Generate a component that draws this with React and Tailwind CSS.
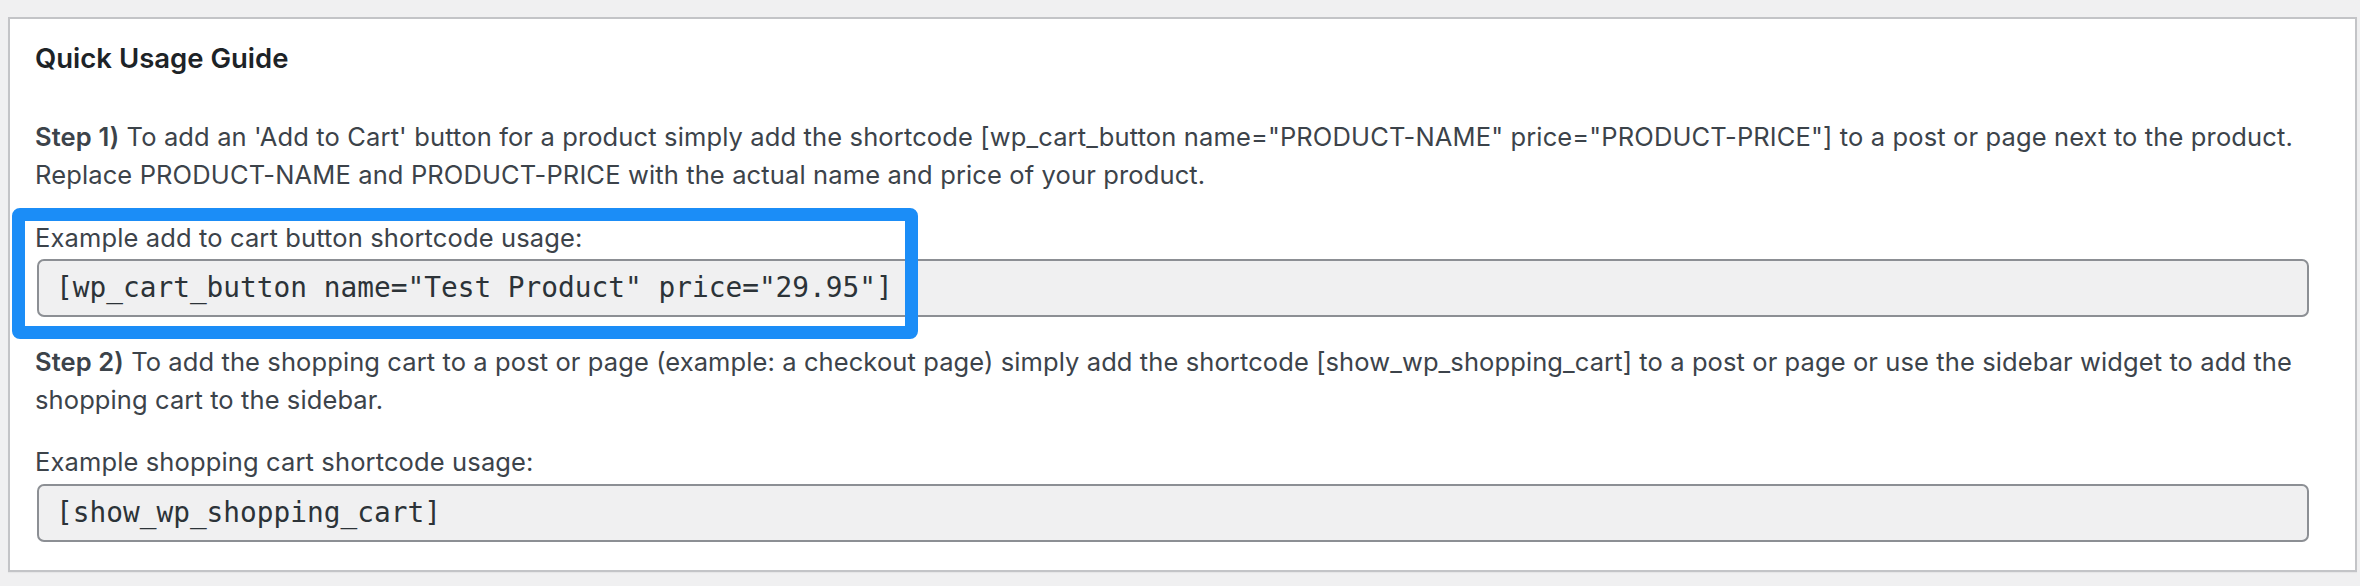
import React from 'react';

const bodyFont = { fontFamily: 'Inter, "Noto Sans", sans-serif' };

function CodeField({ children }) {
    return (
        <div className="mt-[2px] ml-[2px] w-[99%] h-[58px] flex items-center pl-[17px] rounded-[7px] border-2 border-[#8c8f94] bg-[#f0f0f1] font-['DejaVu_Sans_Mono',monospace] text-[27.8px] text-[#2c3338] whitespace-nowrap">
            {children}
        </div>
    );
}

export default function App() {
    return (
        <div className="relative w-[2360px] h-[586px] bg-[#f0f0f1] pt-[17px] pl-[8px] pr-[3px] overflow-hidden" style={bodyFont}>
            {/* Postbox card */}
            <div className="h-[555px] bg-white border-2 border-[#c3c4c7] px-[25px] shadow-[0_1px_1px_rgba(0,0,0,0.04)]">
                <h3 className="mt-[20px] text-[27.5px] leading-[38px] font-semibold text-[#1d2327]">Quick Usage Guide</h3>

                <p className="mt-[41px] text-[25.5px] leading-[38.3px] tracking-[0.13px] text-[#3c434a] whitespace-nowrap">
                    <strong className="font-semibold">Step 1)</strong> To add an 'Add to Cart' button for a product simply add the shortcode [wp_cart_button name="PRODUCT-NAME" price="PRODUCT-PRICE"] to a post or page next to the product.
                    <br />
                    Replace PRODUCT-NAME and PRODUCT-PRICE with the actual name and price of your product.
                </p>

                <div className="mt-[24px] text-[25.5px] leading-[38.3px] tracking-[0.13px] text-[#3c434a]">Example add to cart button shortcode usage:</div>
                <CodeField>[wp_cart_button name="Test Product" price="29.95"]</CodeField>

                <p className="mt-[26px] text-[25.5px] leading-[38.3px] tracking-[0.1px] text-[#3c434a] whitespace-nowrap">
                    <strong className="font-semibold">Step 2)</strong> To add the shopping cart to a post or page (example: a checkout page) simply add the shortcode [show_wp_shopping_cart] to a post or page or use the sidebar widget to add the
                    <br />
                    shopping cart to the sidebar.
                </p>

                <div className="mt-[24px] text-[25.5px] leading-[38.3px] tracking-[0.13px] text-[#3c434a]">Example shopping cart shortcode usage:</div>
                <CodeField>[show_wp_shopping_cart]</CodeField>
            </div>

            {/* Highlight annotation over the first example */}
            <div className="absolute left-[12px] top-[208px] w-[906px] h-[131px] border-[13px] border-[#1b8df7] rounded-[8px] pointer-events-none" />
        </div>
    );
}
